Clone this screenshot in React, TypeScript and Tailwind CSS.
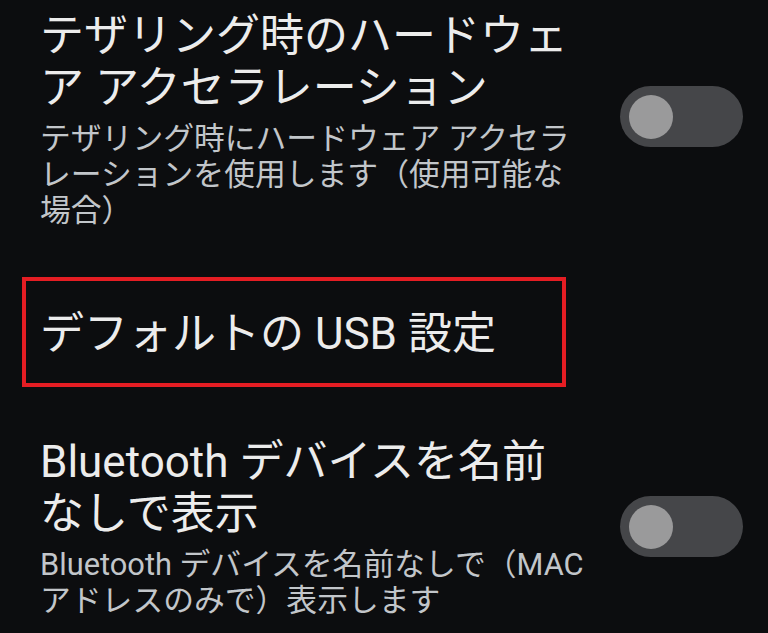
const font = { fontFamily: 'Roboto, "Noto Sans CJK JP", sans-serif' };

function Toggle({ className = '' }: { className?: string }) {
  return (
    <div
      className={`flex h-[61px] w-[123px] shrink-0 items-center rounded-full bg-[#454649] px-[9px] ${className}`}
    >
      <div className="h-[44px] w-[44px] rounded-full bg-[#9a9a9b]" />
    </div>
  );
}

interface SwitchRowProps {
  title: string[];
  summary: string[];
  className: string;
  toggleClass?: string;
}

function SwitchRow({ title, summary, className, toggleClass }: SwitchRowProps) {
  return (
    <div className={`flex items-center pl-[40px] ${className}`}>
      <div className="w-[580px] shrink-0">
        <p className="text-[44px] leading-[52px] text-[#ececec] whitespace-nowrap">
          {title.map((line, i) => (
            <span key={i} className="block">
              {line}
            </span>
          ))}
        </p>
        <p className="mt-[7px] text-[30.8px] leading-[36px] text-[#c2c6ca] whitespace-nowrap">
          {summary.map((line, i) => (
            <span key={i} className="block">
              {line}
            </span>
          ))}
        </p>
      </div>
      <Toggle className={toggleClass} />
    </div>
  );
}

export default function App() {
  return (
    <div className="min-h-screen w-full overflow-hidden bg-[#0c0d0f]" style={font}>
      <SwitchRow
        className="pt-[10px] pb-[3px]"
        toggleClass="mb-[6px]"
        title={['テザリング時のハードウェ', 'ア アクセラレーション']}
        summary={[
          'テザリング時にハードウェア アクセラ',
          'レーションを使用します（使用可能な',
          '場合）',
        ]}
      />

      {/* highlighted preference */}
      <div className="ml-[22px] mt-[45px] w-[544px] border-4 border-[#e51d23] pl-[14px] pt-[27px] pb-[23px]">
        <p className="text-[44px] leading-[52px] text-[#ececec] whitespace-nowrap">デフォルトの USB 設定</p>
      </div>

      <SwitchRow
        className="mt-[46px] pt-[3px] pb-[1px]"
        toggleClass="mb-[2px]"
        title={['Bluetooth デバイスを名前', 'なしで表示']}
        summary={['Bluetooth デバイスを名前なしで（MAC', 'アドレスのみで）表示します']}
      />
    </div>
  );
}
